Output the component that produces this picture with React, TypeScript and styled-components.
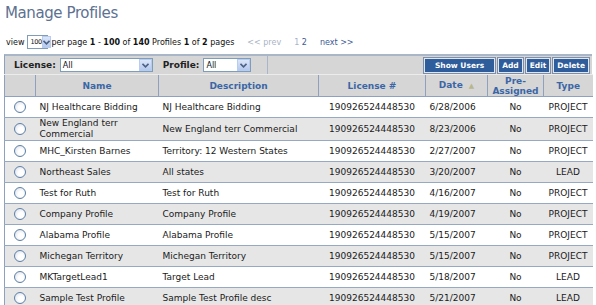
import * as React from "react";
import styled, { createGlobalStyle } from "styled-components";

const GlobalStyle = createGlobalStyle`
  body {
    margin: 0;
    background: #ffffff;
    font-family: "DejaVu Sans", Verdana, sans-serif;
    font-size: 9px;
    color: #111;
  }
`;

const Page = styled.div`
  width: 596px;
  padding: 0 5px 0 4px;
  box-sizing: border-box;
`;

const Title = styled.h1`
  margin: 0;
  padding: 4px 0 0 1px;
  height: 30px;
  box-sizing: border-box;
  font-size: 15px;
  font-weight: normal;
  letter-spacing: -0.4px;
  color: #5d7191;
`;

const Pager = styled.div`
  display: flex;
  align-items: center;
  gap: 3px;
  height: 24px;
  padding-left: 2px;
  font-size: 8px;
  white-space: pre;
`;

const PagerLink = styled.span<{ $dim?: boolean; $tight?: boolean }>`
  color: ${(p) => (p.$dim ? "#a9b3c4" : "#3b5a96")};
  margin-left: ${(p) => (p.$tight ? "0" : "10px")};
`;

const MiniSelect = styled.div<{ $w: number }>`
  display: inline-flex;
  align-items: center;
  justify-content: space-between;
  width: ${(p) => p.$w}px;
  height: 14px;
  box-sizing: border-box;
  border: 1px solid #7f9db9;
  background: #fff;
  padding-left: 2px;
  font-size: ${(p) => (p.$w < 30 ? "6.5px" : "8px")};
  letter-spacing: ${(p) => (p.$w < 30 ? "-0.4px" : "0")};
`;

const DropArrow = styled.span<{ $small?: boolean }>`
  width: ${(p) => (p.$small ? "9px" : "13px")};
  height: 12px;
  box-sizing: border-box;
  background: linear-gradient(#dbe6f8, #b5c9ee);
  border: 1px solid #b8ccf0;
  display: flex;
  align-items: center;
  justify-content: center;
`;

const Toolbar = styled.div`
  display: flex;
  align-items: center;
  height: 18px;
  background: #d6d6d6;
  border-top: 2px solid #a9b6c8;
  border-left: 1px solid #8ea2bf;
  width: 587px;
  box-sizing: content-box;
`;

const Filters = styled.div`
  display: flex;
  align-items: center;
  gap: 4px;
  height: 100%;
  padding-left: 9px;
  padding-right: 16px;
  border-right: 1px solid #a9b6c8;
`;

const FilterLabel = styled.span`
  font-weight: bold;
  color: #222;
  margin-left: 6px;
  &:first-child {
    margin-left: 0;
  }
`;

const Actions = styled.div`
  display: flex;
  gap: 3px;
  margin-left: auto;
  padding-right: 3px;
`;

const ActionButton = styled.button<{ $wide?: boolean }>`
  height: 15px;
  padding: 0 ${(p) => (p.$wide ? "10px" : "3px")};
  background: #2f5c9a;
  color: #fff;
  font-family: "DejaVu Sans", Verdana, sans-serif;
  font-size: 7.5px;
  font-weight: bold;
  border: 1px solid #dfe7f3;
  outline: 1px solid #7e8ea8;
  cursor: pointer;
`;

const Table = styled.table`
  width: 588px;
  border-collapse: collapse;
  table-layout: fixed;
  border-left: 1px solid #8ea2bf;
`;

const HeadCell = styled.th`
  height: 21px;
  padding: 0 2px;
  background: #d6d6d6;
  color: #3b66a6;
  font-size: 9px;
  font-weight: bold;
  line-height: 10px;
  text-align: center;
  border-top: 1px solid #ececec;
  border-left: 1px solid #8ea2bf;
  border-bottom: 1px solid #8ea2bf;
  &:first-child {
    border-left: none;
  }
`;

const Row = styled.tr<{ $alt: boolean }>`
  background: ${(p) => (p.$alt ? "#e6e6e6" : "#ffffff")};
  border-bottom: 1px solid #97a8c2;
`;

const Cell = styled.td<{ $align?: string }>`
  height: 20px;
  padding: 0 4px;
  text-align: ${(p) => p.$align || "left"};
  line-height: 11px;
  color: #1a1a1a;
  overflow: hidden;
  white-space: normal;
`;

const Radio = styled.span`
  display: block;
  width: 12px;
  height: 12px;
  margin: 0 auto;
  border-radius: 50%;
  box-sizing: border-box;
  border: 1px solid #5b7fa8;
  background: radial-gradient(circle at 60% 60%, #ffffff 30%, #d6dbe3 100%);
`;

const SortMark = styled.span`
  color: #b7b78e;
  font-size: 7px;
  margin-left: 6px;
`;

const Arrow = ({ small }: { small?: boolean }) => (
  <DropArrow $small={small}>
    <svg width="7" height="5" viewBox="0 0 7 5">
      <path d="M0.5 0.8 L3.5 3.8 L6.5 0.8" fill="none" stroke="#4d6185" strokeWidth="1.6" />
    </svg>
  </DropArrow>
);

type Profile = {
  name: string;
  desc: string;
  date: string;
  type: string;
};

const profiles: Profile[] = [
  { name: "NJ Healthcare Bidding", desc: "NJ Healthcare Bidding", date: "6/28/2006", type: "PROJECT" },
  { name: "New England terr Commercial", desc: "New England terr Commercial", date: "8/23/2006", type: "PROJECT" },
  { name: "MHC_Kirsten Barnes", desc: "Territory: 12 Western States", date: "2/27/2007", type: "PROJECT" },
  { name: "Northeast Sales", desc: "All states", date: "3/20/2007", type: "LEAD" },
  { name: "Test for Ruth", desc: "Test for Ruth", date: "4/16/2007", type: "PROJECT" },
  { name: "Company Profile", desc: "Company Profile", date: "4/19/2007", type: "PROJECT" },
  { name: "Alabama Profile", desc: "Alabama Profile", date: "5/15/2007", type: "PROJECT" },
  { name: "Michegan Territory", desc: "Michegan Territory", date: "5/15/2007", type: "PROJECT" },
  { name: "MKTargetLead1", desc: "Target Lead", date: "5/18/2007", type: "LEAD" },
  { name: "Sample Test Profile", desc: "Sample Test Profile desc", date: "5/21/2007", type: "LEAD" },
];

const widths = [31, 123, 160, 107, 62, 56, 49];

const App = () => {
  return (
    <Page>
      <GlobalStyle />
      <Title>Manage Profiles</Title>
      <Pager>
        <span>view</span>
        <MiniSelect $w={21}>
          100
          <Arrow small />
        </MiniSelect>
        <span>
          per page <b>1</b> - <b>100</b> of <b>140</b> Profiles <b>1</b> of <b>2</b> pages
        </span>
        <PagerLink $dim>{"<< prev"}</PagerLink>
        <span>
          <PagerLink $dim>1</PagerLink> <PagerLink $tight>2</PagerLink>
        </span>
        <PagerLink>{"next >>"}</PagerLink>
      </Pager>
      <Toolbar>
        <Filters>
          <FilterLabel>License:</FilterLabel>
          <MiniSelect $w={93}>
            All
            <Arrow />
          </MiniSelect>
          <FilterLabel>Profile:</FilterLabel>
          <MiniSelect $w={48}>
            All
            <Arrow />
          </MiniSelect>
        </Filters>
        <Actions>
          <ActionButton $wide>Show Users</ActionButton>
          <ActionButton>Add</ActionButton>
          <ActionButton>Edit</ActionButton>
          <ActionButton>Delete</ActionButton>
        </Actions>
      </Toolbar>
      <Table>
        <colgroup>
          {widths.map((w, i) => (
            <col key={i} style={{ width: w }} />
          ))}
        </colgroup>
        <thead>
          <tr>
            <HeadCell></HeadCell>
            <HeadCell>Name</HeadCell>
            <HeadCell>Description</HeadCell>
            <HeadCell>License #</HeadCell>
            <HeadCell>
              Date<SortMark>▲</SortMark>
            </HeadCell>
            <HeadCell>
              Pre-
              <br />
              Assigned
            </HeadCell>
            <HeadCell>Type</HeadCell>
          </tr>
        </thead>
        <tbody>
          {profiles.map((p, i) => (
            <Row key={p.name} $alt={i % 2 === 1}>
              <Cell $align="center">
                <Radio />
              </Cell>
              <Cell>{p.name}</Cell>
              <Cell>{p.desc}</Cell>
              <Cell $align="center">190926524448530</Cell>
              <Cell>{p.date}</Cell>
              <Cell $align="center">No</Cell>
              <Cell $align="center">{p.type}</Cell>
            </Row>
          ))}
        </tbody>
      </Table>
    </Page>
  );
};

export default App;
